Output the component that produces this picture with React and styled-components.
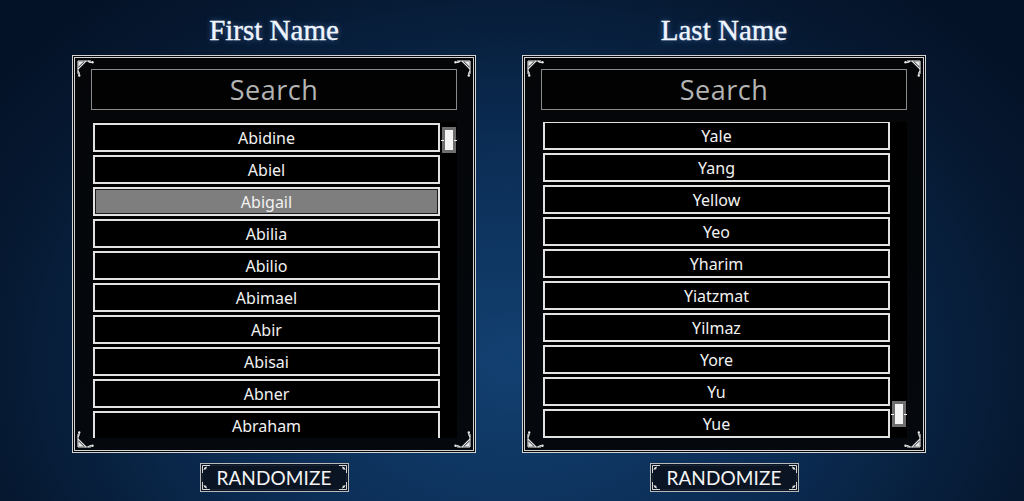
import React from 'react';
import styled, { createGlobalStyle } from 'styled-components';

const GlobalStyle = createGlobalStyle`
  html, body {
    margin: 0;
    padding: 0;
  }
  body {
    width: 1024px;
    height: 501px;
    overflow: hidden;
    background: radial-gradient(ellipse 62% 95% at 50% 72%, #124070 0%, #0b2d55 45%, #061a33 80%, #041227 100%);
    font-family: 'Noto Sans', 'Open Sans', sans-serif;
  }
`;

const Page = styled.div`
  display: flex;
  gap: 46px;
  padding-left: 72px;
  height: 501px;
  box-sizing: border-box;
`;

const Column = styled.div`
  width: 404px;
  display: flex;
  flex-direction: column;
  align-items: center;
`;

const Title = styled.h1`
  margin: 0;
  height: 55px;
  padding-top: 13px;
  box-sizing: border-box;
  font-family: 'Liberation Serif', 'DejaVu Serif', serif;
  font-weight: normal;
  font-size: 29px;
  line-height: 34px;
  color: #eef5ff;
  -webkit-text-stroke: 0.4px #eef5ff;
  text-shadow: 0 0 6px rgba(120, 170, 255, 0.55);
`;

const Panel = styled.div`
  position: relative;
  width: 404px;
  height: 398px;
  box-sizing: border-box;
  border: 3px double #d2d2d2;
  background: linear-gradient(180deg, #040608 0%, #05080d 100%);
  padding: 11px 16px 12px 16px;
  display: flex;
  flex-direction: column;
  gap: 12px;
`;

const Corner = styled.svg`
  position: absolute;
  width: 20px;
  height: 20px;
  ${(p) => (p.$v === 'top' ? 'top: 1px;' : 'bottom: 1px;')}
  ${(p) => (p.$h === 'left' ? 'left: 1px;' : 'right: 1px;')}
  transform: scale(${(p) => (p.$h === 'left' ? 1 : -1)}, ${(p) => (p.$v === 'top' ? 1 : -1)});
`;

const SearchBox = styled.div`
  height: 41px;
  box-sizing: border-box;
  border: 1px solid #8a8a8a;
  background: #020203;
  display: flex;
  align-items: center;
  justify-content: center;
  font-family: 'Open Sans', 'Noto Sans', sans-serif;
  font-size: 27px;
  letter-spacing: 0.5px;
  color: #b4b4b4;
`;

const ListArea = styled.div`
  height: 316px;
  display: flex;
  gap: 2px;
  margin-left: 2px;
  background: #000;
  overflow: hidden;
`;

const Rows = styled.div`
  width: 347px;
  display: flex;
  flex-direction: column;
  gap: 3px;
  margin-top: ${(p) => p.$offset}px;
`;

const Row = styled.div`
  flex: none;
  height: 29px;
  box-sizing: border-box;
  border: 2px solid #e2e2e2;
  background: ${(p) => (p.$selected ? '#7e7e7e' : '#000')};
  box-shadow: ${(p) => (p.$selected ? 'inset 0 0 0 1px #1a1a1a' : 'none')};
  color: #f2f2f2;
  font-family: 'Noto Sans', sans-serif;
  font-size: 16px;
  display: flex;
  align-items: center;
  justify-content: center;
`;

const Track = styled.div`
  width: 14px;
  display: flex;
  flex-direction: column;
  justify-content: ${(p) => (p.$end ? 'flex-end' : 'flex-start')};
  padding: ${(p) => (p.$end ? '0 0 11px 0' : '5px 0 0 0')};
`;

const Thumb = styled.div`
  position: relative;
  width: 14px;
  height: 26px;
  box-sizing: border-box;
  border: 3px solid #6e6e6e;
  background: #f4f4f4;

  &::before,
  &::after {
    content: '';
    position: absolute;
    top: 10px;
    width: 3px;
    height: 1px;
    background: #f4f4f4;
  }
  &::before {
    left: -4px;
  }
  &::after {
    right: -4px;
  }
`;

const RandomButton = styled.button`
  position: relative;
  margin-top: 10px;
  width: 149px;
  height: 29px;
  box-sizing: border-box;
  border: 1px solid #b9b9b9;
  outline: 1px solid #1a2535;
  outline-offset: -3px;
  background: #0a1423;
  color: #f4f4f4;
  font-family: 'Lato', 'Liberation Sans', sans-serif;
  font-size: 19px;
  letter-spacing: 0.1px;
  padding: 0;
  cursor: pointer;
`;

const BtnCorner = styled.svg`
  position: absolute;
  width: 11px;
  height: 11px;
  ${(p) => (p.$v === 'top' ? 'top: 0;' : 'bottom: 0;')}
  ${(p) => (p.$h === 'left' ? 'left: 0;' : 'right: 0;')}
  transform: scale(${(p) => (p.$h === 'left' ? 1 : -1)}, ${(p) => (p.$v === 'top' ? 1 : -1)});
`;

const firstNames = ['Abidine', 'Abiel', 'Abigail', 'Abilia', 'Abilio', 'Abimael', 'Abir', 'Abisai', 'Abner', 'Abraham'];
const lastNames = ['Yale', 'Yang', 'Yellow', 'Yeo', 'Yharim', 'Yiatzmat', 'Yilmaz', 'Yore', 'Yu', 'Yue'];

const corners = [
  ['top', 'left'],
  ['top', 'right'],
  ['bottom', 'left'],
  ['bottom', 'right'],
];

// filigree in each panel corner
const PanelOrnament = ({ v, h }) => (
  <Corner $v={v} $h={h} viewBox="0 0 20 20" fill="none" stroke="#e8e8e8" strokeWidth="1.1">
    <path d="M2 2 H15 M2 2 V15" />
    <path d="M2 10 L10 2" />
    <path d="M3 3 L6.5 3 L3 6.5 Z" fill="#e8e8e8" />
    <path d="M12 2 Q14 4 16 3" />
    <path d="M2 12 Q4 14 3 16" />
    <circle cx="16.5" cy="3.2" r="1.2" fill="#e8e8e8" stroke="none" />
    <circle cx="3.2" cy="16.5" r="1.2" fill="#e8e8e8" stroke="none" />
  </Corner>
);

const ButtonOrnament = ({ v, h }) => (
  <BtnCorner $v={v} $h={h} viewBox="0 0 11 11" fill="none" stroke="#d8d8d8" strokeWidth="1">
    <path d="M1.5 1.5 H9 M1.5 1.5 V9" />
    <path d="M3 6 Q3 3 6 3" />
    <circle cx="4.5" cy="4.5" r="1" fill="#d8d8d8" stroke="none" />
  </BtnCorner>
);

const NamePicker = ({ title, names, selected, offset, thumbAtEnd }) => (
  <Column>
    <Title>{title}</Title>
    <Panel>
      {corners.map(([v, h]) => (
        <PanelOrnament key={v + h} v={v} h={h} />
      ))}
      <SearchBox>Search</SearchBox>
      <ListArea>
        <Rows $offset={offset}>
          {names.map((name) => (
            <Row key={name} $selected={name === selected}>
              {name}
            </Row>
          ))}
        </Rows>
        <Track $end={thumbAtEnd}>
          <Thumb />
        </Track>
      </ListArea>
    </Panel>
    <RandomButton>
      {corners.map(([v, h]) => (
        <ButtonOrnament key={v + h} v={v} h={h} />
      ))}
      RANDOMIZE
    </RandomButton>
  </Column>
);

export default function App() {
  return (
    <>
      <GlobalStyle />
      <Page>
        <NamePicker title="First Name" names={firstNames} selected="Abigail" offset={1} />
        <NamePicker title="Last Name" names={lastNames} offset={-1} thumbAtEnd />
      </Page>
    </>
  );
}
